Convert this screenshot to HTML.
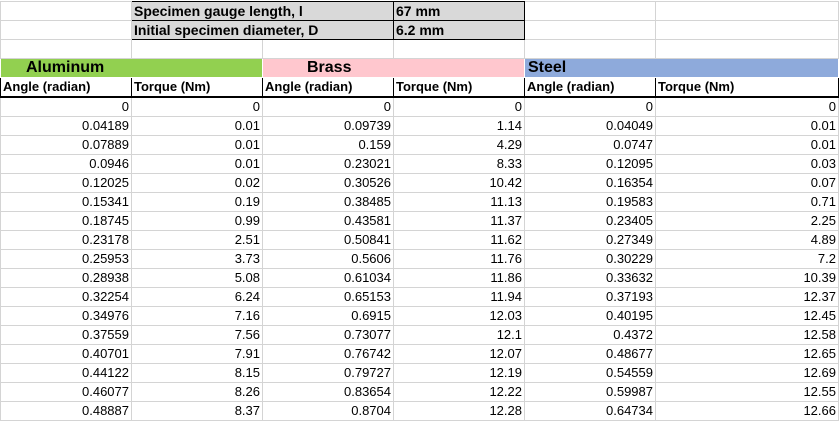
<!DOCTYPE html>
<html><head><style>
body{margin:0;background:#fff;width:839px;height:421px;overflow:hidden}
table{border-collapse:collapse;table-layout:fixed;position:absolute;left:0;top:1px;font-family:"Liberation Sans",sans-serif;font-size:13px;color:#000}
td{border:1px solid #d4d4d4;height:18px;padding:0 2px;line-height:18px;white-space:nowrap;overflow:hidden;text-align:right}
td.l{text-align:left}
.g{background:#d9d9d9;border:1px solid #000;font-weight:bold;text-align:left;font-size:14px}
.t{font-weight:bold;font-size:16px;text-align:left;border-color:transparent}
.h td{font-weight:bold;text-align:left;border:1px solid #000;border-bottom:2px solid #000}
</style></head><body>
<table>
<colgroup><col style="width:131px"><col style="width:131px"><col style="width:131px"><col style="width:131px"><col style="width:131px"><col style="width:183px"></colgroup>
<tr><td></td><td class="g" colspan="2">Specimen gauge length, l</td><td class="g">67 mm</td><td></td><td></td></tr>
<tr><td></td><td class="g" colspan="2">Initial specimen diameter, D</td><td class="g">6.2 mm</td><td></td><td></td></tr>
<tr><td></td><td></td><td></td><td></td><td></td><td></td></tr>
<tr><td class="t" colspan="2" style="background:#92d050;padding-left:25px">Aluminum</td><td class="t" colspan="2" style="background:#ffc7ce;padding-left:44px">Brass</td><td class="t" colspan="2" style="background:#8eaadb;padding-left:3px">Steel</td></tr>
<tr class="h"><td>Angle (radian)</td><td>Torque (Nm)</td><td>Angle (radian)</td><td>Torque (Nm)</td><td>Angle (radian)</td><td>Torque (Nm)</td></tr>
<tr><td>0</td><td>0</td><td>0</td><td>0</td><td>0</td><td>0</td></tr>
<tr><td>0.04189</td><td>0.01</td><td>0.09739</td><td>1.14</td><td>0.04049</td><td>0.01</td></tr>
<tr><td>0.07889</td><td>0.01</td><td>0.159</td><td>4.29</td><td>0.0747</td><td>0.01</td></tr>
<tr><td>0.0946</td><td>0.01</td><td>0.23021</td><td>8.33</td><td>0.12095</td><td>0.03</td></tr>
<tr><td>0.12025</td><td>0.02</td><td>0.30526</td><td>10.42</td><td>0.16354</td><td>0.07</td></tr>
<tr><td>0.15341</td><td>0.19</td><td>0.38485</td><td>11.13</td><td>0.19583</td><td>0.71</td></tr>
<tr><td>0.18745</td><td>0.99</td><td>0.43581</td><td>11.37</td><td>0.23405</td><td>2.25</td></tr>
<tr><td>0.23178</td><td>2.51</td><td>0.50841</td><td>11.62</td><td>0.27349</td><td>4.89</td></tr>
<tr><td>0.25953</td><td>3.73</td><td>0.5606</td><td>11.76</td><td>0.30229</td><td>7.2</td></tr>
<tr><td>0.28938</td><td>5.08</td><td>0.61034</td><td>11.86</td><td>0.33632</td><td>10.39</td></tr>
<tr><td>0.32254</td><td>6.24</td><td>0.65153</td><td>11.94</td><td>0.37193</td><td>12.37</td></tr>
<tr><td>0.34976</td><td>7.16</td><td>0.6915</td><td>12.03</td><td>0.40195</td><td>12.45</td></tr>
<tr><td>0.37559</td><td>7.56</td><td>0.73077</td><td>12.1</td><td>0.4372</td><td>12.58</td></tr>
<tr><td>0.40701</td><td>7.91</td><td>0.76742</td><td>12.07</td><td>0.48677</td><td>12.65</td></tr>
<tr><td>0.44122</td><td>8.15</td><td>0.79727</td><td>12.19</td><td>0.54559</td><td>12.69</td></tr>
<tr><td>0.46077</td><td>8.26</td><td>0.83654</td><td>12.22</td><td>0.59987</td><td>12.55</td></tr>
<tr><td>0.48887</td><td>8.37</td><td>0.8704</td><td>12.28</td><td>0.64734</td><td>12.66</td></tr>
</table>
</body></html>
